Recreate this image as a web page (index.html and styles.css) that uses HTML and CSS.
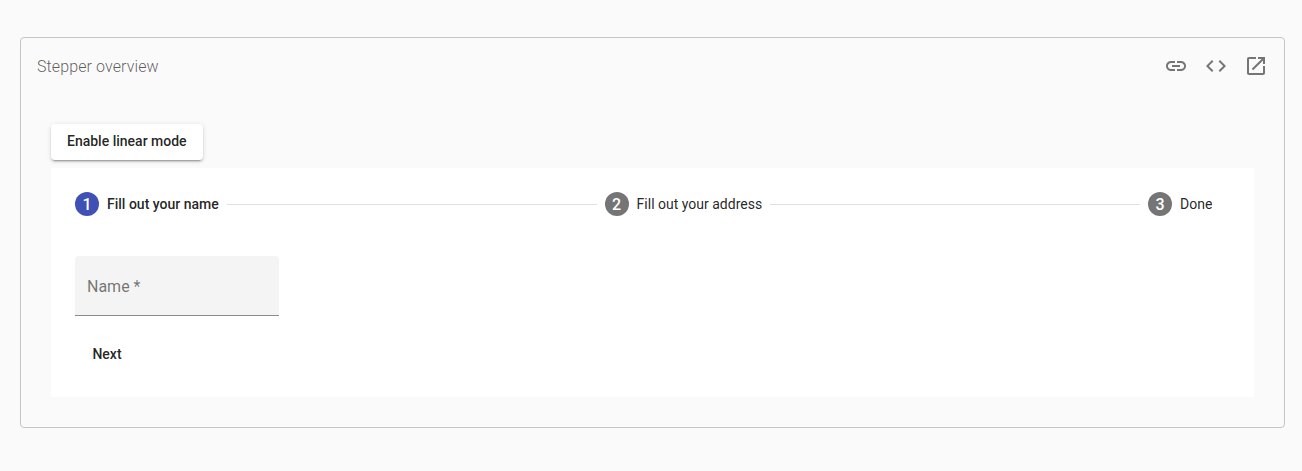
FILE: index.html
```html
<!DOCTYPE html>
<html lang="en">
<head>
    <meta charset="UTF-8">
    <meta name="viewport" content="width=device-width, initial-scale=1.0">
    <title>Stepper overview</title>
    <link rel="stylesheet" href="styles.css">
</head>
<body>
    <div class="example-viewer">
        <div class="viewer-header">
            <h3 class="viewer-title">Stepper overview</h3>
            <button type="button" class="icon-button" aria-label="Copy link">
                <svg viewBox="0 0 24 24"><path d="M3.9 12c0-1.71 1.39-3.1 3.1-3.1h4V7H7c-2.76 0-5 2.24-5 5s2.24 5 5 5h4v-1.9H7c-1.71 0-3.1-1.39-3.1-3.1zM8 13h8v-2H8v2zm9-6h-4v1.9h4c1.71 0 3.1 1.39 3.1 3.1s-1.39 3.1-3.1 3.1h-4V17h4c2.76 0 5-2.24 5-5s-2.24-5-5-5z"/></svg>
            </button>
            <button type="button" class="icon-button" aria-label="View code">
                <svg viewBox="0 0 24 24"><path d="M9.4 16.6L4.8 12l4.6-4.6L8 6l-6 6 6 6 1.4-1.4zm5.2 0l4.6-4.6-4.6-4.6L16 6l6 6-6 6-1.4-1.4z"/></svg>
            </button>
            <button type="button" class="icon-button" aria-label="Open in new window">
                <svg viewBox="0 0 24 24"><path d="M19 19H5V5h7V3H5c-1.11 0-2 .9-2 2v14c0 1.1.89 2 2 2h14c1.1 0 2-.9 2-2v-7h-2v7zM14 3v2h3.59l-9.83 9.83 1.41 1.41L19 6.41V10h2V3h-7z"/></svg>
            </button>
        </div>

        <div class="viewer-body">
            <button type="button" class="raised-button">Enable linear mode</button>

            <div class="stepper">
                <div class="stepper-header">
                    <div class="step active">
                        <span class="step-icon">1</span>
                        <span class="step-label">Fill out your name</span>
                    </div>
                    <div class="step-line"></div>
                    <div class="step">
                        <span class="step-icon">2</span>
                        <span class="step-label">Fill out your address</span>
                    </div>
                    <div class="step-line"></div>
                    <div class="step">
                        <span class="step-icon">3</span>
                        <span class="step-label">Done</span>
                    </div>
                </div>

                <form class="step-content">
                    <input type="text" class="name-field" placeholder="Name *" aria-label="Name" required>
                    <button type="button" class="text-button">Next</button>
                </form>
            </div>
        </div>
    </div>
</body>
</html>
```
FILE: styles.css
```css
* {
    box-sizing: border-box;
}

body {
    margin: 0;
    padding: 37px 17px 0 20px;
    background-color: #fafafa;
    color: rgba(0, 0, 0, 0.87);
    font-family: Roboto, "Liberation Sans", sans-serif;
}

button, input {
    font-family: inherit;
    border: none;
}

.example-viewer {
    height: 391px;
    border: 1px solid #c5c5c5;
    border-radius: 4px;
}

.viewer-header {
    display: flex;
    align-items: center;
    height: 56px;
    padding: 0 8px 0 16px;
}

.viewer-title {
    flex: 1;
    margin: 0;
    font-size: 16px;
    font-weight: 300;
    letter-spacing: 0.1px;
    color: rgba(0, 0, 0, 0.64);
}

.icon-button {
    display: flex;
    align-items: center;
    justify-content: center;
    width: 40px;
    height: 40px;
    padding: 0;
    background: none;
}

.icon-button svg {
    width: 24px;
    height: 24px;
    fill: #757575;
}

.viewer-body {
    padding: 30px;
}

.raised-button {
    display: block;
    height: 36px;
    padding: 0 16px 2px;
    border-radius: 4px;
    background-color: white;
    color: rgba(0, 0, 0, 0.87);
    font-size: 14px;
    font-weight: 500;
    line-height: 34px;
    box-shadow: 0 3px 1px -2px rgba(0, 0, 0, 0.2), 0 2px 2px 0 rgba(0, 0, 0, 0.14), 0 1px 5px 0 rgba(0, 0, 0, 0.12);
}

.stepper {
    height: 229px;
    margin-top: 8px;
    background-color: white;
}

.stepper-header {
    display: flex;
    align-items: center;
    height: 72px;
    padding: 0 24px;
}

.step {
    display: flex;
    align-items: center;
    gap: 8px;
}

.step-icon {
    width: 24px;
    height: 24px;
    border-radius: 50%;
    background-color: #757575;
    color: white;
    font-size: 16px;
    font-weight: 500;
    line-height: 25px;
    text-align: center;
}

.step-label {
    min-width: 50px;
    font-size: 14px;
}

.active .step-icon {
    background-color: #3f51b5;
}

.active .step-label {
    font-weight: 500;
}

.step-line {
    flex: 1;
    height: 1px;
    margin: 0 8px;
    background-color: #e0e0e0;
}

.step-content {
    padding: 16px 24px;
}

.name-field {
    display: block;
    width: 204px;
    height: 60px;
    padding: 2px 12px 0;
    border-bottom: 1px solid #8c8c8c;
    border-radius: 4px 4px 0 0;
    background-color: #f4f4f4;
    font-size: 16px;
    outline: none;
}

.name-field::placeholder {
    color: rgba(0, 0, 0, 0.54);
}

.text-button {
    display: block;
    height: 36px;
    min-width: 64px;
    margin-top: 20px;
    padding: 0 16px;
    background: none;
    color: rgba(0, 0, 0, 0.87);
    font-size: 14px;
    font-weight: 500;
    line-height: 36px;
}
```
